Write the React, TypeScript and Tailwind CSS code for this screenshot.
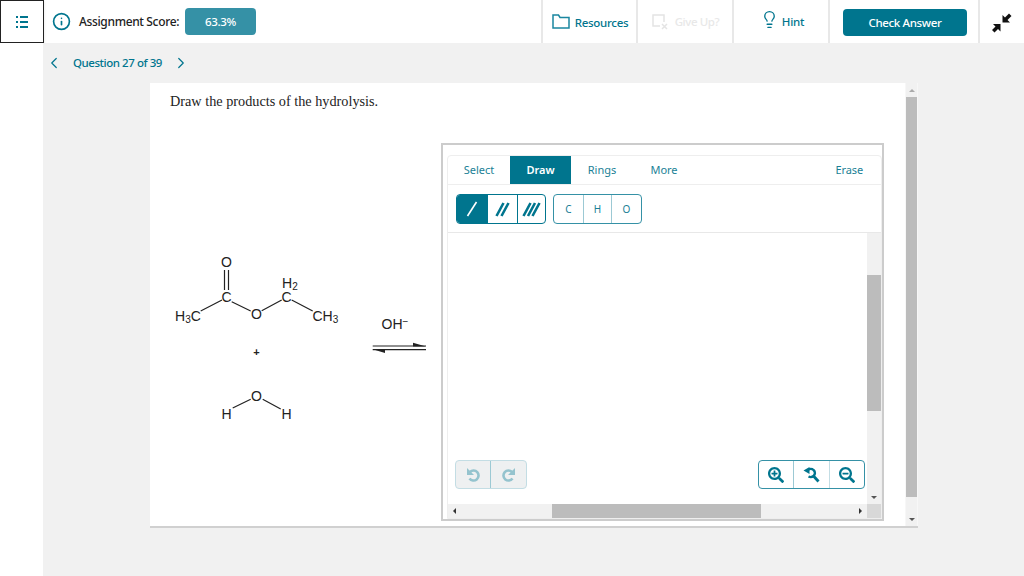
import { ChevronLeft, ChevronRight, Info, Lightbulb } from "lucide-react";
import { FaSearchMinus, FaSearchPlus } from "react-icons/fa";

function Molecule() {
    const label = { fontFamily: "'Liberation Sans', sans-serif", fontSize: 14, fill: "#222" };
    const sub = { fontFamily: "'Liberation Sans', sans-serif", fontSize: 10, fill: "#222" };
    return <svg width="271" height="180" viewBox="170 250 271 180" className="shrink-0">
        <g stroke="#222" strokeWidth="1.2" fill="none">
            <path d="M224.5 270V290M228.5 270V290" />
            <path d="M200.7 311L222 300M231.7 301.7L250.7 311M261.7 310.7L281.7 300M291.7 300L312.7 311" />
            <path d="M232.7 408L250.7 399.3M262.7 399.3L280.7 409" />
            <path d="M372.7 346H426M372.7 349.7H426" />
        </g>
        <path d="M426 346.5L413 342.8V346.5Z" fill="#222" />
        <path d="M372.7 349.2L385 353V349.2Z" fill="#222" />
        <text x="226.5" y="267" textAnchor="middle" style={label}>O</text>
        <text x="226.5" y="302" textAnchor="middle" style={label}>C</text>
        <text x="175" y="321" style={label}>H<tspan style={sub} dy="2">3</tspan><tspan dy="-2">C</tspan></text>
        <text x="256.5" y="319" textAnchor="middle" style={label}>O</text>
        <text x="286.5" y="302" textAnchor="middle" style={label}>C</text>
        <text x="282" y="288" style={label}>H<tspan style={sub} dy="2">2</tspan></text>
        <text x="312.5" y="321" style={label}>CH<tspan style={sub} dy="2">3</tspan></text>
        <text x="256.5" y="356" textAnchor="middle" style={{ ...label, fontSize: 11, fontWeight: 700 }}>+</text>
        <text x="256.5" y="401" textAnchor="middle" style={label}>O</text>
        <text x="226.5" y="419" textAnchor="middle" style={label}>H</text>
        <text x="286.5" y="419" textAnchor="middle" style={label}>H</text>
        <text x="381.5" y="329" style={label}>OH<tspan style={sub} dy="-4">−</tspan></text>
    </svg>
}

function HeaderItem({ children, width }: { children: React.ReactNode; width: string }) {
    return <div className={`flex items-center justify-center border-l-2 border-[#e8e8e8] h-full ${width}`}>{children}</div>
}

function UndoIcon({ flip }: { flip?: boolean }) {
    return <svg width="14" height="15" viewBox="0 0 14 15" fill="none" stroke="#94c3ce" strokeWidth="2.6" className={flip ? "-scale-x-100" : ""}>
        <path d="M4 5A5 5 0 1 1 3.5 11.5" />
        <path d="M1 1V8H8Z" fill="#94c3ce" stroke="none" />
    </svg>
}

export default function App() {
    return <div className="w-[1024px] h-[576px] overflow-hidden bg-white font-['Noto_Sans',sans-serif] flex flex-col">
        <header className="h-[43px] shrink-0 flex items-center bg-white">
            <div className="w-[44px] h-[43px] border border-[#222] shadow-sm flex items-center justify-center shrink-0">
                <svg width="12" height="12" viewBox="0 0 12 12" fill="#00758e">
                    <path d="M0 0H2V2H0ZM0 5H2V7H0ZM0 10H2V12H0ZM4 0H12V2H4ZM4 5H12V7H4ZM4 10H12V12H4Z" />
                </svg>
            </div>
            <Info size={19} strokeWidth={2.1} className="ml-[8px] text-[#00758e]" />
            <p className="ml-[8px] text-[12px] font-medium text-[#222] w-[106px] whitespace-nowrap tracking-[-0.35px]">Assignment Score:</p>
            <div className="w-[71px] h-[27px] rounded-sm bg-[#3591a6] text-white text-[11.5px] font-medium flex items-center justify-center tracking-[-0.3px]">63.3%</div>
            <div className="w-[285px]" />
            <HeaderItem width="w-[95px]">
                <div className="flex items-center gap-[5px] text-[#00758e] ml-[1px]">
                    <svg width="18" height="15" viewBox="0 0 18 15" fill="none" stroke="#1a86a0" strokeWidth="1.5">
                        <path d="M1 2.5V14H17V3.5H8L6.5 1H1Z" />
                    </svg>
                    <span className="text-[11.5px] font-medium mt-[3px] tracking-[-0.3px]">Resources</span>
                </div>
            </HeaderItem>
            <HeaderItem width="w-[96px]">
                <div className="flex items-center gap-[7px] text-[#e8e8e8] ml-[1px]">
                    <svg width="16" height="16" viewBox="0 0 16 16" fill="none" stroke="#e4e4e4" strokeWidth="1.5">
                        <path d="M12 8V1H1V12H8" />
                        <path d="M10 10L15 15M15 10L10 15" />
                    </svg>
                    <span className="text-[11.5px] font-medium tracking-[-0.4px]">Give Up?</span>
                </div>
            </HeaderItem>
            <HeaderItem width="w-[96px]">
                <div className="flex items-center gap-[3px] text-[#00758e] ml-[2px]">
                    <Lightbulb size={19} strokeWidth={1.7} className="mb-[4px]" />
                    <span className="text-[11.5px] font-medium tracking-[-0.2px]">Hint</span>
                </div>
            </HeaderItem>
            <div className="h-full w-[150px] border-l-2 border-[#e8e8e8] flex items-center pl-[13px]">
                <div className="w-[124px] h-[27px] mt-[2px] rounded-sm bg-[#00758e] text-white text-[11.5px] font-medium flex items-center justify-center tracking-[-0.35px]">Check Answer</div>
            </div>
            <div className="h-full flex-1 border-l-2 border-[#e8e8e8] flex items-center justify-center">
                <svg width="20" height="20" viewBox="0 0 20 20" fill="#111" className="mt-[2px] mr-[1px]">
                    <path d="M10.5 9.5V2L13 4.5L17 0.5L19.5 3L15.5 7L18 9.5Z" />
                    <path d="M8.5 11V18.5L6 16L2.5 19.5L0 17L3.5 13.5L1 11Z" />
                </svg>
            </div>
        </header>

        <div className="flex flex-1 min-h-0">
            <div className="w-[43px] shrink-0 bg-white" />
            <main className="flex-1 bg-[#f1f1f1] flex flex-col">
                <nav className="h-[40px] shrink-0 flex items-center text-[#00758e]">
                    <ChevronLeft size={18} strokeWidth={1.6} className="ml-[2px]" />
                    <span className="ml-[10px] text-[11.5px] font-medium w-[99px] whitespace-nowrap tracking-[-0.45px]">Question 27 of 39</span>
                    <ChevronRight size={18} strokeWidth={1.6} />
                </nav>
                <div className="ml-[107px] w-[768px] h-[445px] bg-white border-b-2 border-[#d0d0d0] flex">
                    <div className="flex-1 min-w-0">
                        <p className="ml-[20px] mt-[9px] font-['Liberation_Serif',serif] text-[14.25px] leading-[18px] text-[#222]">Draw the products of the hydrolysis.</p>
                        <div className="flex ml-[20px] mt-[33px]">
                            <div className="self-start mt-[107px]"><Molecule /></div>
                            <div className="w-[443px] h-[378px] border-2 border-[#cccccc] shrink-0 bg-white pt-[10px] pl-[4px] flex flex-col">
                                <div className="border border-[#eeeeee] rounded-t-sm flex flex-col flex-1 min-h-0">
                                    <div className="h-[29px] shrink-0 flex items-center border-b border-[#eeeeee] text-[#1a7f96] text-[11px]">
                                        <span className="w-[62px] text-center">Select</span>
                                        <span className="w-[61px] h-full bg-[#00758e] text-white font-semibold flex items-center justify-center">Draw</span>
                                        <span className="w-[62px] text-center">Rings</span>
                                        <span className="w-[62px] text-center">More</span>
                                        <span className="ml-auto mr-[18px] tracking-[-0.1px]">Erase</span>
                                    </div>
                                    <div className="h-[48px] shrink-0 border-b border-[#e8e8e8] flex items-start pt-[9px] pl-[8px] gap-[7px]">
                                        <div className="flex h-[30px] border border-[#00758e] rounded-sm overflow-hidden">
                                            <div className="w-[30px] bg-[#00758e] flex items-center justify-center">
                                                <svg width="14" height="18" viewBox="0 0 14 18" stroke="#fff" strokeWidth="1.6"><path d="M2.5 16L11.5 2" /></svg>
                                            </div>
                                            <div className="w-[30px] border-l border-[#00758e] flex items-center justify-center">
                                                <svg width="15" height="18" viewBox="0 0 15 18" stroke="#00758e" strokeWidth="2.6"><path d="M1.5 16L8.5 3M6.5 16L13.5 3" /></svg>
                                            </div>
                                            <div className="w-[28px] border-l border-[#00758e] flex items-center justify-center">
                                                <svg width="19" height="18" viewBox="0 0 19 18" stroke="#00758e" strokeWidth="2.6"><path d="M1.5 16L8.5 3M6 16L13 3M10.5 16L17.5 3" /></svg>
                                            </div>
                                        </div>
                                        <div className="flex h-[30px] border border-[#3591a6] rounded-sm text-[#1a7f96] text-[10px]">
                                            <div className="w-[29px] flex items-center justify-center">C</div>
                                            <div className="w-[29px] border-x border-[#9cc9d4] flex items-center justify-center">H</div>
                                            <div className="w-[29px] flex items-center justify-center">O</div>
                                        </div>
                                    </div>
                                    <div className="flex-1 min-h-0 flex flex-col">
                                        <div className="flex flex-1 min-h-0">
                                            <div className="flex-1 flex flex-col justify-end pb-[15px] pl-[7px]">
                                                <div className="flex justify-between items-center pr-[2px]">
                                                    <div className="flex h-[29px] w-[72px] bg-[#eef0f1] border border-[#c3dde4] rounded-sm">
                                                        <div className="w-[35px] border-r border-[#9cc9d4] flex items-center justify-center"><UndoIcon /></div>
                                                        <div className="flex-1 flex items-center justify-center"><UndoIcon flip /></div>
                                                    </div>
                                                    <div className="flex h-[29px] w-[107px] border border-[#3591a6] rounded-sm text-[#00758e]">
                                                        <div className="w-[35px] border-r border-[#9cc9d4] flex items-center justify-center"><FaSearchPlus size={16} /></div>
                                                        <div className="w-[36px] border-r border-[#c3dde4] flex items-center justify-center">
                                                            <svg width="17" height="16" viewBox="0 0 17 16" fill="none" stroke="#00758e" strokeWidth="2.4">
                                                                <path d="M5 3C6.5 1.5 9 1.5 10.5 3C12.5 4.8 12.3 7.5 10.5 9C9 10.3 7 10.3 5.5 9.5" />
                                                                <path d="M10.5 9L15.5 14.5" strokeWidth="2.8" />
                                                                <path d="M0.5 3.5L6.5 0V7Z" fill="#00758e" stroke="none" />
                                                            </svg>
                                                        </div>
                                                        <div className="flex-1 flex items-center justify-center"><FaSearchMinus size={16} /></div>
                                                    </div>
                                                </div>
                                            </div>
                                            <div className="w-[14px] shrink-0 bg-[#f1f1f1] flex flex-col pt-[42px]">
                                                <div className="h-[136px] bg-[#bcbcbc]" />
                                                <div className="mt-auto mb-[5px] mx-auto w-0 h-0 border-x-[3px] border-x-transparent border-t-[3px] border-t-[#555]" />
                                            </div>
                                        </div>
                                        <div className="h-[14px] shrink-0 flex bg-[#f1f1f1]">
                                            <div className="w-[104px] flex items-center pl-[5px]">
                                                <div className="w-0 h-0 border-y-[3px] border-y-transparent border-r-[3px] border-r-[#333]" />
                                            </div>
                                            <div className="w-[209px] bg-[#bcbcbc]" />
                                            <div className="flex-1 flex items-center justify-end pr-[5px]">
                                                <div className="w-0 h-0 border-y-[3px] border-y-transparent border-l-[3px] border-l-[#333]" />
                                            </div>
                                            <div className="w-[14px] bg-[#d8d8d8]" />
                                        </div>
                                    </div>
                                </div>
                            </div>
                        </div>
                    </div>
                    <div className="w-[13px] shrink-0 bg-[#f1f1f1] flex flex-col items-center border-x border-[#f7f7f7]">
                        <div className="h-[14px] flex items-center">
                            <div className="w-0 h-0 border-x-[3px] border-x-transparent border-b-[3px] border-b-[#aaa]" />
                        </div>
                        <div className="w-[11px] h-[400px] bg-[#bcbcbc]" />
                        <div className="mt-auto mb-[5px] w-0 h-0 border-x-[3px] border-x-transparent border-t-[3px] border-t-[#555]" />
                    </div>
                </div>
            </main>
        </div>
    </div>
}
